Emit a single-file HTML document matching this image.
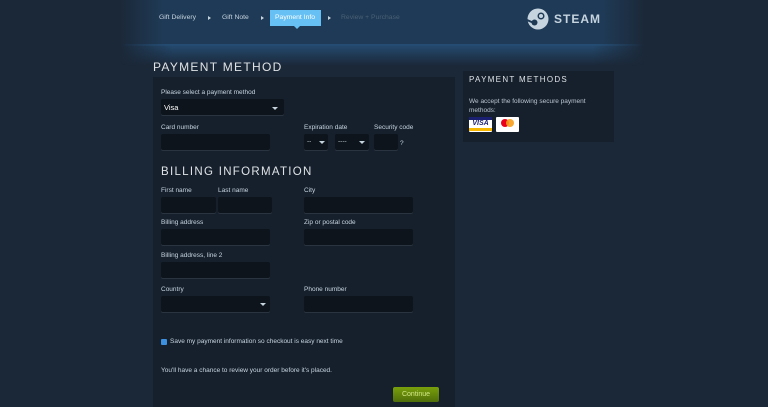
<!DOCTYPE html>
<html><head><style>
body{margin:0;width:768px;height:407px;overflow:hidden;background:#1b2838;font-family:"Liberation Sans",sans-serif;position:relative}
.hdr{position:absolute;left:120px;top:0;width:525px;height:46px;background:linear-gradient(90deg,rgba(31,58,86,0),#1f3a56 8%,#1f3a56 92%,rgba(31,58,86,0));}
.glow{position:absolute;left:120px;top:44px;width:525px;height:22px;background:linear-gradient(rgba(38,80,120,.9),rgba(27,40,56,0));-webkit-mask:linear-gradient(90deg,transparent,#000 10%,#000 90%,transparent);}
.a{position:absolute;font-size:6.5px;color:#c6d4df;white-space:nowrap}
.bc{position:absolute;top:14px;font-size:6.8px;color:#c6d4df}
.tri{position:absolute;top:16px;width:0;height:0;border-left:3px solid #c6d4df;border-top:2.5px solid transparent;border-bottom:2.5px solid transparent}
.panel{position:absolute;background:#16202d}
.in{position:absolute;background:#0e141b;border-radius:2px;box-shadow:0 1px 0 #2a3440}
.h{position:absolute;color:#dfe3e6;letter-spacing:1.3px;white-space:nowrap}
.dd{position:absolute;width:0;height:0;border-top:3px solid #c6d4df;border-left:3px solid transparent;border-right:3px solid transparent}
</style></head><body>
<div class="hdr"></div><div class="glow"></div>
<div class="bc" style="left:159px">Gift Delivery</div><div class="tri" style="left:208px"></div>
<div class="bc" style="left:222px">Gift Note</div><div class="tri" style="left:261px"></div>
<div style="position:absolute;left:270px;top:10px;width:51px;height:16px;background:#66c0f4"></div>
<div style="position:absolute;left:294px;top:26px;border-top:3px solid #66c0f4;border-left:3px solid transparent;border-right:3px solid transparent"></div>
<div class="bc" style="left:275px;color:#fff">Payment Info</div><div class="tri" style="left:328px"></div>
<div class="bc" style="left:341px;color:#4a6075">Review + Purchase</div>
<svg style="position:absolute;left:527px;top:8px" width="22" height="22" viewBox="0 0 22 22"><circle cx="11" cy="11" r="10.5" fill="#c6d4df"/><circle cx="14" cy="8" r="3.5" fill="#1e3a55"/><circle cx="14" cy="8" r="2" fill="#c6d4df"/><circle cx="7.5" cy="14.5" r="3" fill="#1e3a55"/><path d="M0 12L7 15" stroke="#1e3a55" stroke-width="2"/></svg>
<div style="position:absolute;left:554px;top:12px;font-size:12px;font-weight:bold;color:#c6d4df;letter-spacing:1px">STEAM</div>

<div class="h" style="left:153px;top:60px;font-size:12px">PAYMENT METHOD</div>
<div class="panel" style="left:153px;top:77px;width:302px;height:330px"></div>
<div class="a" style="left:161px;top:89px">Please select a payment method</div>
<div class="in" style="left:161px;top:99px;width:123px;height:16px"></div>
<div class="a" style="left:164px;top:103px;font-size:7.5px;color:#fff">Visa</div><div class="dd" style="left:272px;top:107px"></div>
<div class="a" style="left:161px;top:124px">Card number</div>
<div class="in" style="left:161px;top:134px;width:109px;height:16px"></div>
<div class="a" style="left:304px;top:124px">Expiration date</div>
<div class="a" style="left:374px;top:124px">Security code</div>
<div class="in" style="left:304px;top:134px;width:24px;height:16px"></div><div class="a" style="left:307px;top:138px">--</div><div class="dd" style="left:319px;top:141px"></div>
<div class="in" style="left:335px;top:134px;width:34px;height:16px"></div><div class="a" style="left:338px;top:138px">----</div><div class="dd" style="left:359px;top:141px"></div>
<div class="in" style="left:374px;top:134px;width:24px;height:16px"></div><div class="a" style="left:400px;top:140px">?</div>
<div class="h" style="left:161px;top:166px;font-size:11.5px">BILLING INFORMATION</div>
<div class="a" style="left:161px;top:187px">First name</div><div class="a" style="left:218px;top:187px">Last name</div><div class="a" style="left:304px;top:187px">City</div>
<div class="in" style="left:161px;top:197px;width:55px;height:16px"></div><div class="in" style="left:218px;top:197px;width:54px;height:16px"></div><div class="in" style="left:304px;top:197px;width:109px;height:16px"></div>
<div class="a" style="left:161px;top:219px">Billing address</div><div class="a" style="left:304px;top:219px">Zip or postal code</div>
<div class="in" style="left:161px;top:229px;width:109px;height:16px"></div><div class="in" style="left:304px;top:229px;width:109px;height:16px"></div>
<div class="a" style="left:161px;top:252px">Billing address, line 2</div>
<div class="in" style="left:161px;top:262px;width:109px;height:16px"></div>
<div class="a" style="left:161px;top:286px">Country</div><div class="a" style="left:304px;top:286px">Phone number</div>
<div class="in" style="left:161px;top:296px;width:109px;height:16px"></div><div class="dd" style="left:260px;top:303px"></div><div class="in" style="left:304px;top:296px;width:109px;height:16px"></div>
<div style="position:absolute;left:161px;top:339px;width:6px;height:6px;background:#3d8fe0;border-radius:1px"></div>
<div class="a" style="left:170px;top:338px">Save my payment information so checkout is easy next time</div>
<div class="a" style="left:161px;top:367px">You'll have a chance to review your order before it's placed.</div>
<div style="position:absolute;left:393px;top:387px;width:46px;height:15px;background:linear-gradient(#79a00c,#4f6e0a);border-radius:2px;color:#d2e885;font-size:7px;text-align:center;line-height:15px">Continue</div>

<div class="panel" style="left:463px;top:71px;width:151px;height:71px"></div>
<div class="h" style="left:469px;top:75px;font-size:8px">PAYMENT METHODS</div>
<div class="a" style="left:469px;top:97px;color:#b8c4cf;line-height:9px">We accept the following secure payment<br>methods:</div>
<div style="position:absolute;left:469px;top:117px;width:23px;height:15px;background:#fff;border-radius:1px"><div style="height:3px;background:#1a1f71"></div><div style="font-size:7px;font-weight:bold;font-style:italic;color:#1a1f71;text-align:center;line-height:8px">VISA</div><div style="height:3px;background:#f7b600"></div></div>
<div style="position:absolute;left:496px;top:117px;width:23px;height:15px;background:#fff;border-radius:1px"><div style="position:absolute;left:5px;top:2px;width:8px;height:8px;border-radius:50%;background:#eb001b"></div><div style="position:absolute;left:10px;top:2px;width:8px;height:8px;border-radius:50%;background:#f79e1b;opacity:.9"></div></div>
</body></html>
